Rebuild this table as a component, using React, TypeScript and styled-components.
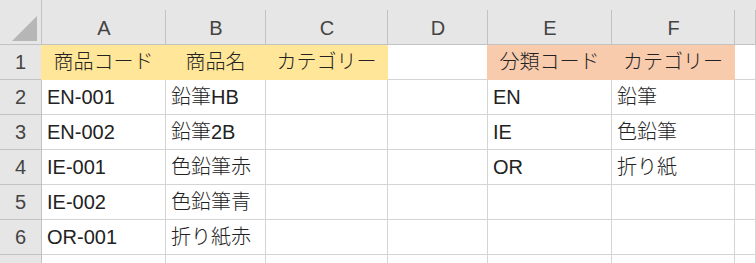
import React from 'react';
import styled, { createGlobalStyle } from 'styled-components';

const GlobalStyle = createGlobalStyle`
  html, body {
    margin: 0;
    padding: 0;
    background: #ffffff;
    overflow: hidden;
  }
`;

const HEAD_BG = '#e6e6e6';
const HEAD_LINE = '#c2c2c2';
const GRID_LINE = '#d4d4d4';

const COLUMNS = ['A', 'B', 'C', 'D', 'E', 'F', ''];

const YELLOW = '#ffe699';
const ORANGE = '#f8cbad';

type Row = { label: string; cells: string[]; fills?: (string | undefined)[]; centered?: boolean };

const ROWS: Row[] = [
  {
    label: '1',
    cells: ['商品コード', '商品名', 'カテゴリー', '', '分類コード', 'カテゴリー', ''],
    fills: [YELLOW, YELLOW, YELLOW, undefined, ORANGE, ORANGE, undefined],
    centered: true,
  },
  { label: '2', cells: ['EN-001', '鉛筆HB', '', '', 'EN', '鉛筆', ''] },
  { label: '3', cells: ['EN-002', '鉛筆2B', '', '', 'IE', '色鉛筆', ''] },
  { label: '4', cells: ['IE-001', '色鉛筆赤', '', '', 'OR', '折り紙', ''] },
  { label: '5', cells: ['IE-002', '色鉛筆青', '', '', '', '', ''] },
  { label: '6', cells: ['OR-001', '折り紙赤', '', '', '', '', ''] },
  // next row only peeks in at the bottom edge
  { label: '', cells: ['', '', '', '', '', '', ''] },
];

const Sheet = styled.div`
  display: grid;
  grid-template-columns: 42px 124px 100px 122px 100px 124px 123px 1fr;
  grid-template-rows: 45px repeat(6, 35px) 35px;
  width: 756px;
  height: 263px;
  overflow: hidden;
  font-family: 'Liberation Sans', 'Noto Sans CJK JP', sans-serif;
  font-size: 20px;
  font-weight: 300;
`;

const Corner = styled.div`
  background: ${HEAD_BG};
  border-right: 1px solid ${HEAD_LINE};
  border-bottom: 1px solid ${HEAD_LINE};
  display: flex;
  align-items: flex-end;
  justify-content: flex-end;
  padding: 0 3px 2px 0;

  svg {
    display: block;
  }
`;

const ColHead = styled.div`
  display: flex;
  align-items: flex-end;
  justify-content: center;
  padding-bottom: 4px;
  line-height: 24px;
  color: #444444;
  border-bottom: 1px solid ${HEAD_LINE};
  background:
    linear-gradient(${HEAD_LINE}, ${HEAD_LINE}) right 10px / 1px calc(100% - 10px) no-repeat,
    ${HEAD_BG};
`;

const RowHead = styled.div`
  line-height: 34px;
  text-align: center;
  color: #444444;
  background: ${HEAD_BG};
  border-right: 1px solid ${HEAD_LINE};
  border-bottom: 1px solid ${HEAD_LINE};
  overflow: hidden;
`;

const Cell = styled.div<{ $fill?: string; $centered?: boolean }>`
  line-height: 34px;
  padding: 0 5px;
  white-space: nowrap;
  overflow: hidden;
  color: #222222;
  text-align: ${(p) => (p.$centered ? 'center' : 'left')};
  background: ${(p) => p.$fill ?? '#ffffff'};
  border-right: 1px solid ${(p) => p.$fill ?? GRID_LINE};
  border-bottom: 1px solid ${(p) => p.$fill ?? GRID_LINE};
  box-shadow: ${(p) => (p.$fill ? `-1px 0 0 ${p.$fill}` : 'none')};
`;

function SelectAllMark() {
  return (
    <svg width="26" height="26" viewBox="0 0 26 26">
      <polygon points="25,0 25,25 0,25" fill="#b6b6b6" />
    </svg>
  );
}

export default function App() {
  return (
    <>
      <GlobalStyle />
      <Sheet>
        <Corner>
          <SelectAllMark />
        </Corner>
        {COLUMNS.map((c, i) => (
          <ColHead key={i}>{c}</ColHead>
        ))}
        {ROWS.map((row, r) => (
          <React.Fragment key={r}>
            <RowHead>{row.label}</RowHead>
            {row.cells.map((text, c) => (
              <Cell key={c} $fill={row.fills?.[c]} $centered={row.centered}>
                {text}
              </Cell>
            ))}
          </React.Fragment>
        ))}
      </Sheet>
    </>
  );
}
